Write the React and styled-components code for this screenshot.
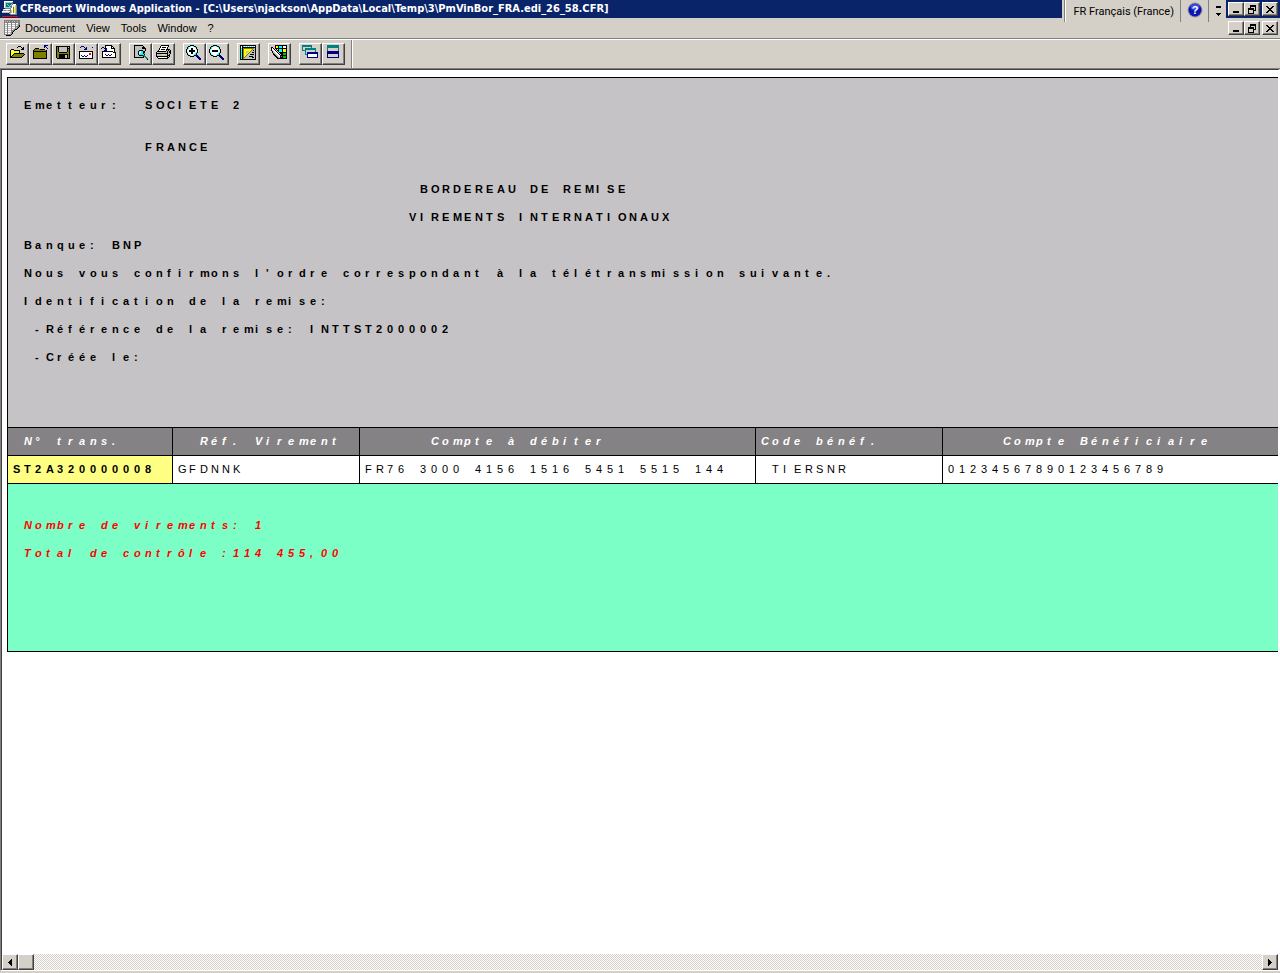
import styled, { createGlobalStyle, css } from "styled-components"

const palette = {
    k: "#000000",
    w: "#ffffff",
    y: "#ffff00",
    o: "#808000",
    c: "#00ffff",
    b: "#000080",
    t: "#008080",
    g: "#808080",
    l: "#c0c0c0",
    r: "#ff0000",
    n: "#00c000",
}

const art = {
    app: [
        "..wwwwwwwww.....",
        "..wlllllllg.....",
        "..wlttttttg.....",
        "..wltctttlgwww..",
        "..wlttctlgwwwlg.",
        "..wltttctgwlwlg.",
        "..wllllllgwoylg.",
        "...ggggggwwoylg.",
        ".lwwwwwwgwwoylg.",
        ".lggllggglwoylg.",
        "wwwwwwwwglwoylg.",
        "lllllllgglwoylg.",
        ".......glwwwwlg.",
        "........ggggggg.",
        "................",
        "rrrrrrrrrrrrrrrr",
    ],
    document: [
        "gggggggggggggggg",
        "glglglgglglgglgg",
        "gggggggggggggggg",
        "gwwgwwwgwwwgwwgg",
        "gllglllglllgllgg",
        "gwwgwwwgwwwgwlgk",
        "gllglllglllggggk",
        "gwwgwwwgwwwglgk.",
        "gllglllglllggk..",
        "gwwgwwwgwlgkk...",
        "gllglllgggk.....",
        "gwwgwwwggk......",
        "gllglllgk.......",
        "gwwgwwlgk.......",
        "gggggggk........",
        "..kkkkk.........",
    ],
    open: [
        "................",
        ".........kkk....",
        "........k...k.k.",
        ".............kk.",
        "..kkk.......kkk.",
        ".kywykkkkkk.....",
        ".kwyyyyyyyk.....",
        ".kyyyyyyyyk.....",
        ".kwyykkkkkkkkkk.",
        ".kyykooooooooook",
        ".kykooooooooook.",
        ".kkooooooooook..",
        ".kkkkkkkkkkkk...",
        "................",
        "................",
        "................",
    ],
    close: [
        "............bbbb",
        "............bb..",
        "............b.b.",
        "...kkkk........b",
        "..koooookkkkk...",
        ".kooooooooooook.",
        ".kkkkkkkkkkkkkk.",
        ".kooooooooooook.",
        ".kooooooooooook.",
        ".kooooooooooook.",
        ".kooooooooooook.",
        ".kooooooooooook.",
        ".kooooooooooook.",
        ".kkkkkkkkkkkkkk.",
        "................",
        "................",
    ],
    save: [
        "................",
        ".kkkkkkkkkkkkkk.",
        ".kokllllllllklk.",
        ".kokllllllllkkk.",
        ".kokllllllllkok.",
        ".kokllllllllkok.",
        ".kokllllllllkok.",
        ".kookkkkkkkkook.",
        ".kooooooooooook.",
        ".kookkkkkkkkkok.",
        ".kookkkkkkllkok.",
        ".kookkkkkkllkok.",
        ".kookkkkkkllkok.",
        "..kkkkkkkkkkkkk.",
        "................",
        "................",
    ],
    mail: [
        "................",
        "...bbb..........",
        "..b...b.b.....b.",
        ".......bb.......",
        "......bbb.......",
        "................",
        ".kkkkkkkkkkkkkk.",
        ".kwwwwwwwwwwwwk.",
        ".kwwwwwwwwwrrwk.",
        ".kwwwwwwwwwrrwk.",
        ".kwbwwbwwbwwwwk.",
        ".kwwbbwbbwwwwwk.",
        ".kwwwwwwwwwwwwk.",
        ".kkkkkkkkkkkkkk.",
        "................",
        "................",
    ],
    mailPage: [
        "....kkkkkkk.....",
        "....kwwwwwkk....",
        ".bb.kwwwwwkwk...",
        "b..bkbwwwwkkkk..",
        "....bbwwwwwwwk..",
        "...bbbwwwwwwwk..",
        ".kkkkkkkkkkkwk..",
        ".kwwwwwwwwwwkkk.",
        ".kwwwwwwwwwwwwk.",
        ".kwwbwwbwwbwwwk.",
        ".kwwwbbwbbwwwwk.",
        ".kwwwwwwwwwwwwk.",
        ".kkkkkkkkkkkkkk.",
        "................",
        "................",
        "................",
    ],
    preview: [
        "..kkkkkkkkk.....",
        "..kllllllllk....",
        "..klllllllkkk...",
        "..klllllllkkkk..",
        "..kllllllllllk..",
        "..kllllkkkkllk..",
        "..klllkcwcckk...",
        "..klllkwwcckk...",
        "..klllkwccckg...",
        "..klllkccccck...",
        "..kllllkkkktt...",
        "..kllllllllktt..",
        "..kkkkkkkkkk.tt.",
        "..............tt",
        "...............k",
        "................",
    ],
    print: [
        "......kkkkkkkk..",
        ".....kwwwwwwwk..",
        ".....kwkkkkwk...",
        "....kwwwwwwwk...",
        "....kwkkkkwkkkk.",
        "...kwwwwwwwklklk",
        "..kkkkkkkkklklkk",
        ".kllllllllllklkk",
        ".kkkkkkkkkkkkllk",
        ".klllllyyyllklk.",
        ".kllllllllllkkk.",
        ".kkkkkkkkkkkklk.",
        "..kwwwwwwwwwkk..",
        "...kkkkkkkkkk...",
        "................",
        "................",
    ],
    zoomIn: [
        "....kkkk........",
        "..kkcwwckk......",
        ".kcwwwwwwck.....",
        ".kcwwkkwwwk.....",
        "kcwwwkkwwwck....",
        "kwwkkkkkkwwk....",
        "kwwkkkkkkwwk....",
        "kcwwwkkwwwck....",
        ".kwwwkkwwck.....",
        ".kcwwwwwcck.....",
        "..kkcwwckkbb....",
        "....kkkk..bbb...",
        "...........bbb..",
        "............bbb.",
        ".............bb.",
        "................",
    ],
    zoomOut: [
        "....kkkk........",
        "..kkcwwckk......",
        ".kcwwwwwwck.....",
        ".kcwwwwwwwk.....",
        "kcwwwwwwwwck....",
        "kwwkkkkkkwwk....",
        "kwwkkkkkkwwk....",
        "kcwwwwwwwwck....",
        ".kwwwwwwwck.....",
        ".kcwwwwwcck.....",
        "..kkcwwckkbb....",
        "....kkkk..bbb...",
        "...........bbb..",
        "............bbb.",
        ".............bb.",
        "................",
    ],
    design: [
        "kkkkkkkkkkkkkkkk",
        "kwkcwcwcwcwcwcwk",
        "kwkkkkkkkkkkkkkk",
        "kckooooooooooolk",
        "kckoyyyyyyyyollk",
        "kckoyyyyyyyolklk",
        "kckoyylllyollllk",
        "kckoyyllyollkklk",
        "kckoyylyollllllk",
        "kckoyyyollkkkklk",
        "kckoyyollllllllk",
        "kckoyolllkkkkllk",
        "kckoolllllllkklk",
        "kckolllllllllllk",
        "kkkkkkkkkkkkkkkk",
        "................",
    ],
    chart: [
        "....kkkkkkkkkkkk",
        "....kyykccckwwwk",
        "kk..kyykccckwwwk",
        "kwk.kkkkkkkkkkkk",
        "kwwk.kykccckyyyk",
        "klwwk.kkccckyyyk",
        ".klwwk.kccckyyyk",
        ".kllwwk.kkkkkkkk",
        "..kllwwk.kkknnnk",
        "..kkllwwk.kknnnk",
        "...kkllwwkkkkkkk",
        "....kkllwkgknnnk",
        ".....kkllkkknnnk",
        "......kkkkkkkkkk",
        "................",
        "................",
    ],
    cascade: [
        "tttttttttt......",
        "tttttttttt......",
        "t........t......",
        "t..ttttttttttt..",
        "t..ttttttttttt..",
        "tttt.........t..",
        "...t.........t..",
        "...t.bbbbbbbbbbb",
        "...t.bbbbbbbbbbb",
        "...ttbwwwwwwwwwb",
        ".....bwwwwwwwwwb",
        ".....bwwwwwwwwwb",
        ".....bbbbbbbbbbb",
        "................",
        "................",
        "................",
    ],
    tile: [
        "..tttttttttttt..",
        "..tttttttttttt..",
        "..tttttttttttt..",
        "..t..........t..",
        "..t..........t..",
        "..t..........t..",
        "..bbbbbbbbbbbb..",
        "..bbbbbbbbbbbb..",
        "..bbbbbbbbbbbb..",
        "..b..........b..",
        "..b..........b..",
        "..b..........b..",
        "..bbbbbbbbbbbb..",
        "................",
        "................",
        "................",
    ],
    minimize: [
        ".........",
        ".........",
        ".........",
        ".........",
        ".........",
        ".........",
        ".kkkkkk..",
        ".kkkkkk..",
        ".........",
    ],
    restore: [
        "..kkkkkk.",
        "..kkkkkk.",
        "..k....k.",
        "kkkkkk.k.",
        "kkkkkk.k.",
        "k....kkk.",
        "k....k...",
        "k....k...",
        "kkkkkk...",
    ],
    cross: [
        ".........",
        "kk....kk.",
        ".kk..kk..",
        "..kkkk...",
        "...kk....",
        "..kkkk...",
        ".kk..kk..",
        "kk....kk.",
        ".........",
    ],
    left: [
        "...k",
        "..kk",
        ".kkk",
        "kkkk",
        ".kkk",
        "..kk",
        "...k",
    ],
    right: [
        "k...",
        "kk..",
        "kkk.",
        "kkkk",
        "kkk.",
        "kk..",
        "k...",
    ],
    options: [
        "kkkkk",
        "kkkkk",
        ".....",
        ".....",
        ".....",
        ".....",
        ".....",
        "kkkkk",
        ".kkk.",
        "..k..",
    ],
}

function PixelIcon ({ name }) {
    const rows = art[name]
    const width = rows[0].length
    return (
        <Drawing width={width} height={rows.length} viewBox={`0 0 ${width} ${rows.length}`} shapeRendering="crispEdges" aria-hidden="true">
            {rows.map((row, y) =>
                [...row].map((key, x) =>
                    palette[key] ? <rect key={`${x}-${y}`} x={x} y={y} width="1" height="1" fill={palette[key]} /> : null
                )
            )}
        </Drawing>
    )
}

// report text is printed one character per cell
function Cells ({ text }) {
    return [...text].map((char, index) => <Cell key={index}>{char}</Cell>)
}

const menus = ["Document", "View", "Tools", "Window", "?"]

const toolGroups = [
    [["open", "Open"], ["close", "Close"], ["save", "Save"], ["mail", "Send"], ["mailPage", "Send page"]],
    [["preview", "Preview"], ["print", "Print"]],
    [["zoomIn", "Zoom in"], ["zoomOut", "Zoom out"]],
    [["design", "Layout"]],
    [["chart", "Colours"]],
    [["cascade", "Cascade"], ["tile", "Tile"]],
]

const heading = [
    " Emetteur:  SOCIETE 2",
    "",
    "",
    "            FRANCE",
    "",
    "",
    "                                     BORDEREAU DE REMISE",
    "",
    "                                    VIREMENTS INTERNATIONAUX",
    "",
    " Banque: BNP",
    "",
    " Nous vous confirmons l'ordre correspondant à la télétransmission suivante.",
    "",
    " Identification de la remise:",
    "",
    "  -Référence de la remise: INTTST2000002",
    "",
    "  -Créée le:",
]

const columns = [
    { title: " N° trans.", width: "165px" },
    { title: "  Réf. Virement", width: "187px" },
    { title: "      Compte à débiter", width: "396px" },
    { title: "Code bénéf.", width: "187px" },
    { title: "     Compte Bénéficiaire", width: "auto" },
]

const transfers = [
    ["ST2A320000008", "GFDNNK", "FR76 3000 4156 1516 5451 5515 144", " TIERSNR", "01234567890123456789"],
]

const totals = [
    " Nombre de virements: 1",
    "",
    " Total de contrôle :114 455,00",
]

function WindowControls () {
    return (
        <Controls>
            <CaptionButton aria-label="Minimize"><PixelIcon name="minimize" /></CaptionButton>
            <CaptionButton aria-label="Restore"><PixelIcon name="restore" /></CaptionButton>
            <CaptionButton aria-label="Close" $apart><PixelIcon name="cross" /></CaptionButton>
        </Controls>
    )
}

export default function App () {
    return (
        <Window>
            <GlobalStyle />
            <TitleBar>
                <PixelIcon name="app" />
                <Title>CFReport Windows Application - [C:\Users\njackson\AppData\Local\Temp\3\PmVinBor_FRA.edi_26_58.CFR]</Title>
                <LanguageBar>
                    <Language>FR Français (France)</Language>
                    <HelpButton aria-label="Help">
                        <svg width="16" height="16" viewBox="0 0 16 16" aria-hidden="true">
                            <circle cx="8" cy="8" r="7.5" fill="#9a9a9a" />
                            <circle cx="8" cy="8" r="6.5" fill="#0a14b4" />
                            <ellipse cx="8" cy="5" rx="4.5" ry="3" fill="#3c50e6" />
                            <text x="8" y="12" textAnchor="middle" fontSize="11" fontWeight="bold" fontFamily="Liberation Sans, sans-serif" fill="#fff">?</text>
                        </svg>
                    </HelpButton>
                    <OptionsButton aria-label="Options"><PixelIcon name="options" /></OptionsButton>
                </LanguageBar>
                <WindowControls />
            </TitleBar>
            <MenuBar>
                <PixelIcon name="document" />
                <MenuItems>
                    {menus.map(menu => <MenuItem key={menu}>{menu}</MenuItem>)}
                </MenuItems>
                <WindowControls />
            </MenuBar>
            <ToolBar>
                {toolGroups.map((group, index) => (
                    <ToolGroup key={index}>
                        {group.map(([icon, label]) => (
                            <ToolButton key={icon} aria-label={label}><PixelIcon name={icon} /></ToolButton>
                        ))}
                    </ToolGroup>
                ))}
            </ToolBar>
            <Client>
                <Report>
                    <Heading>
                        {heading.map((line, index) => <Line key={index}><Cells text={line} /></Line>)}
                    </Heading>
                    <Transfers>
                        <colgroup>
                            {columns.map(column => <Column key={column.title} $width={column.width} />)}
                        </colgroup>
                        <thead>
                            <tr>
                                {columns.map(column => <HeadCell key={column.title}><Cells text={column.title} /></HeadCell>)}
                            </tr>
                        </thead>
                        <tbody>
                            {transfers.map(row => (
                                <tr key={row[0]}>
                                    {row.map((value, index) => <DataCell key={index} $marked={index === 0}><Cells text={value} /></DataCell>)}
                                </tr>
                            ))}
                        </tbody>
                    </Transfers>
                    <Totals>
                        {totals.map((line, index) => <Line key={index}><Cells text={line} /></Line>)}
                    </Totals>
                </Report>
                <ScrollBar>
                    <ScrollButton aria-label="Scroll left"><PixelIcon name="left" /></ScrollButton>
                    <ScrollThumb />
                    <ScrollTrack />
                    <ScrollButton aria-label="Scroll right"><PixelIcon name="right" /></ScrollButton>
                </ScrollBar>
            </Client>
        </Window>
    )
}

const GlobalStyle = createGlobalStyle`
    * {
        box-sizing: border-box;
    }

    body {
        margin: 0;
        background: #d4d0c8;
    }

    button {
        margin: 0;
        padding: 0;
        border: 0;
        font: inherit;
        color: inherit;
        background: none;
    }
`

const raised = css`
    display: flex;
    align-items: center;
    justify-content: center;
    background: #d4d0c8;
    border: 1px solid;
    border-color: #ffffff #404040 #404040 #ffffff;
    box-shadow: inset -1px -1px 0 #808080;
`

const Drawing = styled.svg`
    display: block;
    flex: none;
`

const Window = styled.div`
    display: flex;
    flex-direction: column;
    min-height: 100vh;
    color: #000000;
    background: #d4d0c8;
    font-family: "Liberation Sans", Arial, sans-serif;
    font-size: 11px;
`

const TitleBar = styled.header`
    display: flex;
    align-items: center;
    height: 18px;
    padding-left: 2px;
    background: #0a246a;
`

const Title = styled.h1`
    flex: 1;
    min-width: 0;
    margin: 0;
    padding-left: 2px;
    overflow: hidden;
    color: #ffffff;
    font-family: "DejaVu Sans Condensed", "DejaVu Sans", sans-serif;
    font-size: 11px;
    font-weight: bold;
    line-height: 18px;
    white-space: nowrap;
`

const LanguageBar = styled.div`
    display: flex;
    align-self: stretch;
    align-items: center;
    height: 22px;
    padding-left: 2px;
    border-right: 1px solid #d4d0c8;
    background: #d4d0c8;
`

const Language = styled.button`
    && {
        height: 22px;
        padding: 0 6px 0 8px;
        border-left: 1px solid #808080;
        box-shadow: inset 1px 0 0 #ffffff;
        font-family: Roboto, sans-serif;
        white-space: nowrap;
    }
`

const HelpButton = styled.button`
    height: 22px;
    padding: 0 5px 0 6px;
    border-left: 1px solid #808080;
    border-right: 1px solid #808080;
`

const OptionsButton = styled.button`
    width: 16px;
    padding-left: 7px;
`

const Controls = styled.div`
    display: flex;
    padding: 0 2px;
`

const CaptionButton = styled.button`
    && {
        ${raised}
        width: 16px;
        height: 14px;
        margin-left: ${props => props.$apart ? "2px" : "0"};
    }
`

const MenuBar = styled.nav`
    display: flex;
    align-items: center;
    height: 21px;
    padding-left: 4px;
    border-bottom: 1px solid #808080;
`

const MenuItems = styled.div`
    display: flex;
    flex: 1;
    gap: 11px;
    padding-left: 5px;
`

const MenuItem = styled.button`
    line-height: 16px;
`

const ToolBar = styled.div`
    display: flex;
    gap: 8px;
    height: 30px;
    padding: 3px 0 0 6px;
    border-top: 1px solid #ffffff;
    border-bottom: 1px solid #808080;
`

const ToolGroup = styled.div`
    display: flex;
    height: 22px;

    &:last-child {
        height: 28px;
        margin-top: -3px;
        padding: 3px 6px 0 0;
        border-right: 1px solid #808080;
        box-shadow: 1px 0 0 #ffffff;
    }
`

const ToolButton = styled.button`
    && {
        ${raised}
        width: 23px;
        height: 22px;
        padding: 0 1px 2px 0;
    }
`

const Client = styled.main`
    display: flex;
    flex: 1;
    flex-direction: column;
    margin-bottom: 2px;
    border: 1px solid #808080;
    border-top-color: #404040;
    border-right: 2px solid #ffffff;
    border-bottom: 1px solid #ffffff;
    box-shadow: inset 1px 0 0 #404040;
    background: #ffffff;
`

const Report = styled.article`
    flex: 1;
    padding: 7px 0 0 6px;
    overflow: hidden;
`

const Heading = styled.section`
    height: 351px;
    padding: 20px 5px 0;
    border: 1px solid #000000;
    border-right: 0;
    background: #c6c3c6;
    font-weight: bold;
`

const Line = styled.div`
    height: 14px;
    line-height: 14px;
    white-space: pre;
`

const Cell = styled.span`
    display: inline-block;
    width: 11px;
    white-space: pre;
`

const Column = styled.col`
    width: ${props => props.$width};
`

const Transfers = styled.table`
    width: 100%;
    table-layout: fixed;
    border-collapse: separate;
    border-spacing: 0;
    border-left: 1px solid #000000;
`

const tableCell = css`
    height: 28px;
    padding: 0 0 2px 5px;
    overflow: hidden;
    border-right: 1px solid #000000;
    border-bottom: 1px solid #000000;
    line-height: 14px;
    text-align: left;
    white-space: pre;

    &:last-child {
        border-right: 0;
    }
`

const HeadCell = styled.th`
    ${tableCell}
    color: #ffffff;
    background: #848284;
    font-style: italic;
    font-weight: bold;
`

const DataCell = styled.td`
    ${tableCell}
    background: ${props => props.$marked ? "#ffff84" : "#ffffff"};
    font-weight: ${props => props.$marked ? "bold" : "normal"};
`

const Totals = styled.section`
    height: 168px;
    padding: 34px 5px 0;
    border: 1px solid #000000;
    border-width: 0 0 1px 1px;
    color: #ff0000;
    background: #7bffc6;
    font-style: italic;
    font-weight: bold;
`

const ScrollBar = styled.div`
    display: flex;
    height: 16px;
    margin-left: 1px;
`

const ScrollButton = styled.button`
    && {
        ${raised}
        flex: none;
        width: 16px;
    }
`

const ScrollThumb = styled.div`
    ${raised}
    width: 16px;
`

const ScrollTrack = styled.div`
    flex: 1;
    background: repeating-conic-gradient(#ffffff 0 25%, #d4d0c8 0 50%) 0 0 / 2px 2px;
`
